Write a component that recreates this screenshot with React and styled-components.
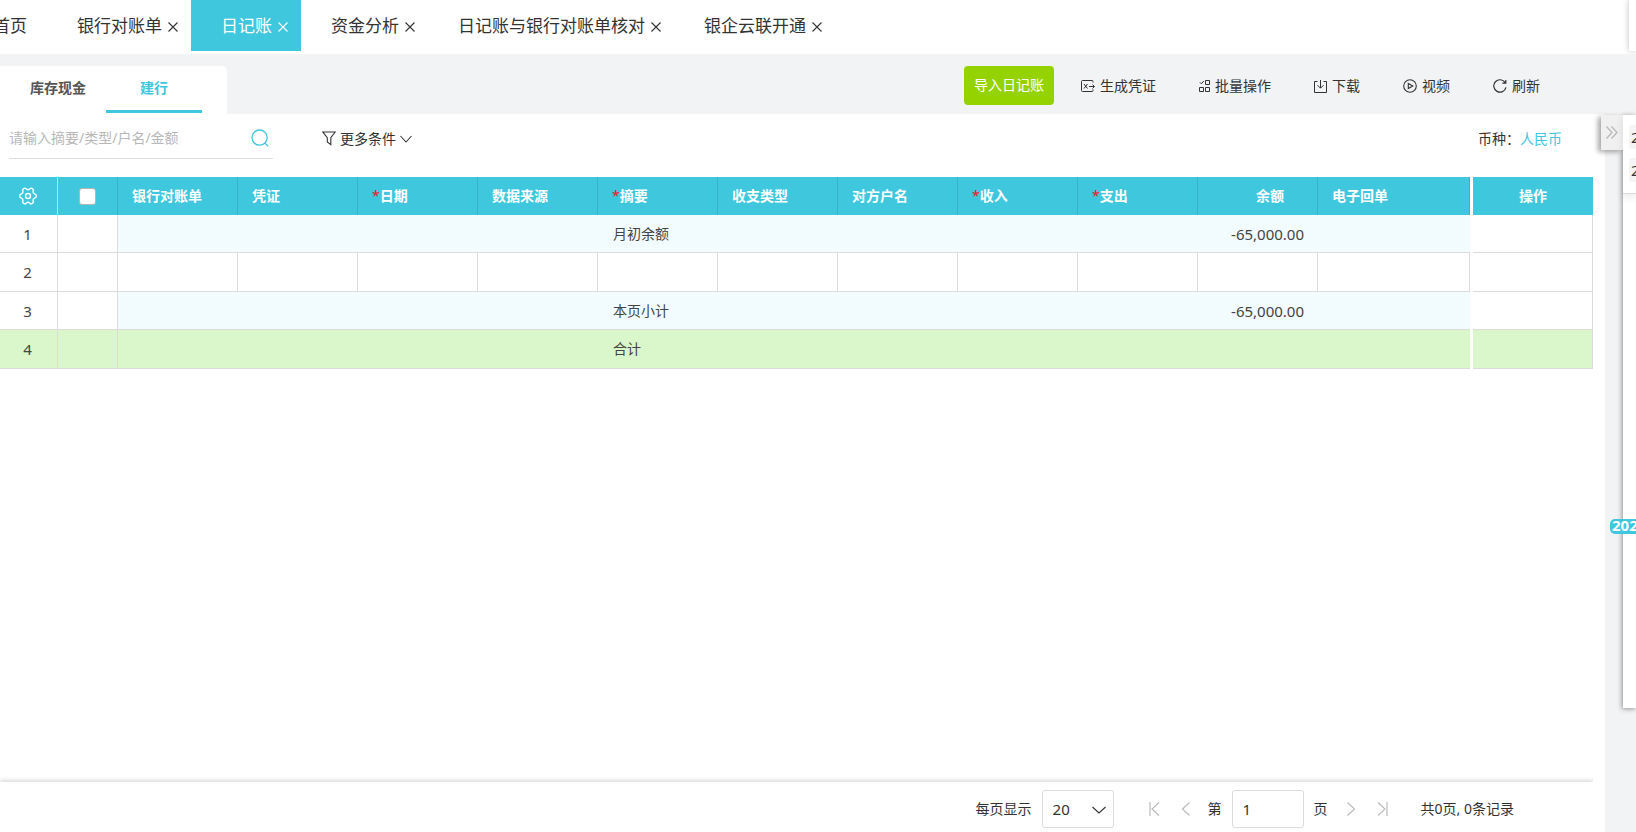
import React from "react";
import styled, { createGlobalStyle, css } from "styled-components";

const cyan = "#3fc7de";
const line = "#dcdcdc";

const GlobalStyle = createGlobalStyle`
  *, *::before, *::after { box-sizing: border-box; }
  body {
    margin: 0;
    background: #fff;
    color: #333;
    font-family: "Noto Sans", "Noto Sans CJK SC", sans-serif;
    font-size: 14px;
    line-height: 20px;
  }
  button, input, select { font: inherit; color: inherit; margin: 0; }
`;

const Page = styled.div`
  display: flex;
  flex-direction: column;
  min-height: 100vh;
  overflow: hidden;
`;

/* window tabs */
const TopBar = styled.header`
  display: flex;
  justify-content: space-between;
  height: 54px;
`;
const WindowTabs = styled.nav`
  display: flex;
  height: 51px;
  margin-left: -37px;
`;
const WindowTab = styled.div`
  display: flex;
  align-items: center;
  gap: 6px;
  padding: 0 ${(p) => (p.$fixed ? "20px" : "13px")} 0 30px;
  background: ${(p) => (p.$active ? cyan : "transparent")};
  color: ${(p) => (p.$active ? "#fff" : "#333")};
`;
const WindowLink = styled.a`
  color: inherit;
  font-size: 17px;
  line-height: 24px;
  text-decoration: none;
  white-space: nowrap;
`;
const BareButton = styled.button`
  display: flex;
  align-items: center;
  padding: 0;
  border: 0;
  background: none;
  cursor: pointer;
`;
const CloseButton = styled(BareButton)`
  padding-top: 3px;
`;
const TopBox = styled.div`
  width: 7px;
  height: 51px;
  background: #fff;
  box-shadow: 0 0 6px rgba(0, 0, 0, 0.25);
`;

const Body = styled.div`
  position: relative;
  display: flex;
  flex: 1;
  background: #f2f3f5;
`;
const Main = styled.main`
  display: flex;
  flex: 1;
  flex-direction: column;
  min-width: 0;
  margin-right: 31px;
`;

const ActionBar = styled.div`
  display: flex;
  align-items: flex-end;
  justify-content: space-between;
  height: 60px;
`;
const AccountTabs = styled.div`
  display: flex;
  height: 48px;
  padding: 0 25px 0 10px;
  border-radius: 0 5px 0 0;
  background: #fff;
`;
const AccountTab = styled.button`
  width: 96px;
  height: 47px;
  padding: 0;
  border: 0;
  border-bottom: 3px solid ${(p) => (p.$active ? cyan : "transparent")};
  background: none;
  color: ${(p) => (p.$active ? cyan : "#555")};
  font-weight: 700;
`;
const Actions = styled.div`
  display: flex;
  align-items: center;
  gap: 43px;
  height: 48px;
  padding: 0 65px 10px 0;
`;
const ImportButton = styled.button`
  height: 39px;
  margin-right: -16px;
  padding: 0 10px;
  border: 0;
  border-radius: 4px;
  background: #95d300;
  color: #fff;
`;
const Action = styled(BareButton)`
  gap: 5px;
  padding-top: 2px;
  white-space: nowrap;
`;

/* search row */
const Content = styled.section`
  display: flex;
  flex: 1;
  flex-direction: column;
  padding-right: 12px;
  background: #fff;
`;
const FilterRow = styled.div`
  display: flex;
  align-items: center;
  height: 63px;
  padding: 0 31px 14px 9px;
`;
const SearchBox = styled.label`
  display: flex;
  align-items: center;
  width: 264px;
  height: 40px;
  padding-right: 4px;
  border-bottom: 1px solid ${line};
`;
const SearchInput = styled.input`
  flex: 1;
  min-width: 0;
  padding: 0;
  border: 0;
  outline: 0;
  background: none;
  &::placeholder { color: #b8b8b8; }
`;
const MoreButton = styled(BareButton)`
  gap: 4px;
  margin-left: 49px;
`;
const Currency = styled.div`
  margin-left: auto;
  a { color: ${cyan}; text-decoration: none; }
`;

/* journal table */
const Table = styled.table`
  width: 100%;
  table-layout: fixed;
  border-collapse: separate;
  border-spacing: 0;
`;
const Col = styled.col`
  width: ${(p) => (p.$w ? `${p.$w}px` : "auto")};
`;
const HeadCell = styled.th`
  height: 38px;
  padding: 0 ${(p) => (p.$align === "right" ? "33px" : "0")} 0 ${(p) => (p.$align ? "0" : "14px")};
  border-right: 1px solid ${(p) => (p.$first ? "#c5dde1" : "#34b3c9")};
  background: ${cyan};
  color: #fff;
  font-weight: 700;
  text-align: ${(p) => p.$align || "left"};
  ${(p) => p.$pinned && css`
    border-right: 0;
    border-left: 3px solid #fff;
  `}
  svg, input { display: block; margin: 0 auto; }
`;
const Required = styled.span`
  color: #f01818;
  font-weight: 400;
`;
const Row = styled.tr`
  height: 38px;
  background: ${(p) => (p.$total ? "#d9f7ca" : "#fff")};
  &:nth-child(even) { height: 39px; }
`;
const Cell = styled.td`
  padding: 0 14px 0 15px;
  border-bottom: 1px solid ${line};
  border-right: ${(p) => (p.$merged ? "0" : `1px solid ${line}`)};
  background: ${(p) => (p.$tint ? "#f2fbfe" : "inherit")};
  color: #444;
  text-align: ${(p) => p.$align || "left"};
  white-space: nowrap;
  ${(p) => p.$numeric && css`font-size: 15px;`}
  ${(p) => p.$index && css`padding: 0 2px 0 0;`}
`;
const PinnedCell = styled(Cell)`
  border-bottom: 0;
  box-shadow: inset 3px 0 #fff, inset 0 -1px ${line};
`;
const CheckAll = styled.input`
  width: 17px;
  height: 17px;
  appearance: none;
  border: 1px solid #b5b5b5;
  border-radius: 3px;
  background: #fff;
  &:checked { background: #1c8ea3; }
`;
const SettingsButton = styled(BareButton)`
  width: 100%;
  padding-right: 2px;
  color: #fff;
`;

/* pager */
const Pager = styled.footer`
  display: flex;
  align-items: center;
  justify-content: flex-end;
  height: 50px;
  margin-top: auto;
  padding: 3px 79px 0 0;
  box-shadow: 0 -2px 4px rgba(0, 0, 0, 0.14);
  clip-path: inset(-12px 0 0 0);
  white-space: nowrap;
`;
const PageSize = styled.label`
  display: flex;
  align-items: center;
  gap: 10px;
`;
const SelectWrap = styled.span`
  position: relative;
  svg {
    position: absolute;
    right: 8px;
    top: 16px;
    pointer-events: none;
  }
`;
const boxed = css`
  display: block;
  width: 72px;
  height: 38px;
  padding: 0 10px;
  border: 1px solid ${line};
  border-radius: 3px;
  background: #fff;
  font-size: 15px;
`;
const Select = styled.select`
  ${boxed}
  appearance: none;
`;
const PageInput = styled.input`
  ${boxed}
`;
const Steps = styled.div`
  display: flex;
  align-items: center;
  gap: 21px;
  margin: 0 ${(p) => (p.$after ? "33px" : "17px")} 0 ${(p) => (p.$after ? "18px" : "35px")};
`;
const PageNumber = styled.label`
  display: flex;
  align-items: center;
  gap: 10px;
`;

/* collapsed drawer at the window's edge */
const Drawer = styled.aside`
  position: absolute;
  top: 61px;
  right: 0;
  bottom: 124px;
  width: 13px;
  background: #fff;
  box-shadow: -1px 1px 5px rgba(0, 0, 0, 0.4);
`;
const DrawerHandle = styled.button`
  position: absolute;
  top: 0;
  right: 13px;
  display: flex;
  align-items: center;
  justify-content: center;
  width: 22px;
  height: 35px;
  padding: 0;
  border: 0;
  background: #f0f0f0;
  box-shadow: -3px 2px 5px rgba(0, 0, 0, 0.35);
`;
const DrawerHead = styled.div`
  position: relative;
  display: flex;
  flex-direction: column;
  gap: 9px;
  height: 79px;
  padding: 10px 0 0 6px;
  border-bottom: 1px solid ${line};
  background: #fff;
  box-shadow: 0 3px 8px rgba(0, 0, 0, 0.1);
  overflow: hidden;
`;
const DrawerTag = styled.span`
  height: 24px;
  padding-left: 2px;
  border-radius: 3px 0 0 3px;
  background: #f4f4f4;
  font-size: 15px;
  line-height: 24px;
`;
const YearBadge = styled.span`
  position: absolute;
  top: 404px;
  right: 0;
  width: 26px;
  height: 15px;
  padding-left: 2px;
  overflow: hidden;
  border-radius: 5px 0 0 5px;
  background: ${cyan};
  color: #fff;
  font-size: 15px;
  font-weight: 700;
  line-height: 13px;
`;

const Svg = ({ w, h, sw = 1, children, color = "currentColor" }) => (
  <svg width={w} height={h} viewBox={`0 0 ${w} ${h}`} fill="none" stroke={color} strokeWidth={sw} aria-hidden="true">
    {children}
  </svg>
);
const CloseIcon = () => <Svg w={10} h={10} sw={1.1}><path d="M.5.5l9 9M9.5.5l-9 9" /></Svg>;
const VoucherIcon = () => (
  <Svg w={14} h={12}>
    <path d="M12 2.5V1.5q0-1-1-1h-9.500q-1 0-1 1v9q0 1 1 1h9.500q1 0 1-1V9.500M3 4l3.500 4.500M6.500 4L3 8.500M8 6.500h5.300M11.500 4.500l2 2-2 2" />
  </Svg>
);
const BatchIcon = () => (
  <Svg w={11} h={12}>
    <path d="M.8 2.200l1.600 1.600L4.800 1M6.500.5h4v4h-4zM.5 7.500h4v4h-4zM6.500 7.500h4v4h-4z" />
  </Svg>
);
const DownloadIcon = () => (
  <Svg w={13} h={13}>
    <path d="M3.500 1.500h-3v11h12v-11h-3M6.500 0v8M3.500 5.200l3 3 3-3" />
  </Svg>
);
const VideoIcon = () => (
  <Svg w={14} h={14} sw={1.1}>
    <circle cx="7" cy="7" r="6.300" />
    <path d="M5.300 4.400v5.200L9.800 7z" />
  </Svg>
);
const RefreshIcon = () => (
  <Svg w={14} h={14} sw={1.2}>
    <path d="M12.200 3.600A6.200 6.200 0 1 0 13 8.400M12.800.9v3.300H9.400" />
  </Svg>
);
const SearchIcon = () => (
  <Svg w={18} h={18} sw={1.3} color={cyan}>
    <circle cx="8.600" cy="8.600" r="7.600" />
    <path d="M13.600 13.800l3.400 3.400" />
  </Svg>
);
const FunnelIcon = () => (
  <Svg w={14} h={15} sw={1.1}>
    <path d="M.8 1h12.400L8.800 6.600v7L5.300 11V6.600z" />
  </Svg>
);
const ChevronDown = ({ w = 12 }) => (
  <Svg w={w} h={8} sw={1.1}><path d={`M.5 1l${w / 2 - 0.5} 6 ${w / 2 - 0.5}-6`} /></Svg>
);
const GearIcon = () => (
  <Svg w={18} h={18} sw={1.4}>
    <circle cx="9" cy="9" r="2.500" />
    <path
      strokeLinejoin="round"
      d="M5.200 1.300Q6.800.7 7.600 2.300Q9 3.300 10.400 2.300Q11.200.7 12.800 1.300L14 2.200Q14.700 3.200 14 4.600Q14 6.400 15.700 6.900Q17.300 7.400 17.300 9Q17.300 10.600 15.700 11.100Q14 11.600 14 13.400Q14.700 14.800 14 15.800L12.800 16.700Q11.200 17.300 10.400 15.700Q9 14.700 7.600 15.700Q6.800 17.300 5.200 16.700L4 15.800Q3.300 14.800 4 13.400Q4 11.600 2.300 11.100Q.7 10.600.7 9Q.7 7.400 2.300 6.900Q4 6.400 4 4.600Q3.300 3.200 4 2.200Z"
    />
  </Svg>
);
const FirstIcon = () => <Svg w={11} h={14} color="#bbb" sw={1.2}><path d="M1 0v14M10 .5L3 7l7 6.500" /></Svg>;
const PrevIcon = () => <Svg w={10} h={14} color="#bbb" sw={1.2}><path d="M8.500.5L1.500 7l7 6.500" /></Svg>;
const NextIcon = () => <Svg w={10} h={14} color="#bbb" sw={1.2}><path d="M1.500.5l7 6.500-7 6.500" /></Svg>;
const LastIcon = () => <Svg w={11} h={14} color="#bbb" sw={1.2}><path d="M10 0v14M1 .5L8 7l-7 6.500" /></Svg>;
const DoubleRight = () => (
  <Svg w={12} h={13} color="#b8b8b8" sw={1.3}><path d="M.5.5l5.500 6-5.500 6M5.500.5l5.500 6-5.500 6" /></Svg>
);

const windows = ["首页", "银行对账单", "日记账", "资金分析", "日记账与银行对账单核对", "银企云联开通"];
const actions = [
  ["生成凭证", VoucherIcon],
  ["批量操作", BatchIcon],
  ["下载", DownloadIcon],
  ["视频", VideoIcon],
  ["刷新", RefreshIcon],
];
const columns = [
  { name: "银行对账单" },
  { name: "凭证" },
  { name: "日期", required: true },
  { name: "数据来源" },
  { name: "摘要", required: true },
  { name: "收支类型" },
  { name: "对方户名" },
  { name: "收入", required: true },
  { name: "支出", required: true },
  { name: "余额", align: "right" },
  { name: "电子回单" },
];
const rows = [
  { merged: true, tint: true, 摘要: "月初余额", 余额: "-65,000.00" },
  {},
  { merged: true, tint: true, 摘要: "本页小计", 余额: "-65,000.00" },
  { merged: true, total: true, 摘要: "合计" },
];

export default function App() {
  return (
    <Page>
      <GlobalStyle />
      <TopBar>
        <WindowTabs>
          {windows.map((name, i) => (
            <WindowTab key={name} $active={i === 2} $fixed={i === 0}>
              <WindowLink href="#">{name}</WindowLink>
              {i > 0 && <CloseButton aria-label={`关闭${name}`}><CloseIcon /></CloseButton>}
            </WindowTab>
          ))}
        </WindowTabs>
        <TopBox />
      </TopBar>
      <Body>
        <Main>
          <ActionBar>
            <AccountTabs>
              <AccountTab>库存现金</AccountTab>
              <AccountTab $active>建行</AccountTab>
            </AccountTabs>
            <Actions>
              <ImportButton>导入日记账</ImportButton>
              {actions.map(([name, Icon]) => (
                <Action key={name}><Icon />{name}</Action>
              ))}
            </Actions>
          </ActionBar>
          <Content>
            <FilterRow>
              <SearchBox>
                <SearchInput aria-label="搜索" placeholder="请输入摘要/类型/户名/金额" />
                <SearchIcon />
              </SearchBox>
              <MoreButton><FunnelIcon />更多条件<ChevronDown /></MoreButton>
              <Currency>币种：<a href="#">人民币</a></Currency>
            </FilterRow>
            <Table>
              <colgroup>
                <Col $w={58} />
                <Col $w={60} />
                {columns.map((c, i) => <Col key={c.name} $w={i < columns.length - 1 ? 120 : 0} />)}
                <Col $w={123} />
              </colgroup>
              <thead>
                <tr>
                  <HeadCell $align="center" $first>
                    <SettingsButton aria-label="列设置"><GearIcon /></SettingsButton>
                  </HeadCell>
                  <HeadCell $align="center"><CheckAll type="checkbox" aria-label="全选" /></HeadCell>
                  {columns.map((c) => (
                    <HeadCell key={c.name} $align={c.align}>
                      {c.required && <Required>*</Required>}{c.name}
                    </HeadCell>
                  ))}
                  <HeadCell $align="center" $pinned>操作</HeadCell>
                </tr>
              </thead>
              <tbody>
                {rows.map((r, i) => (
                  <Row key={i} $total={r.total}>
                    <Cell $align="center" $numeric $index>{i + 1}</Cell>
                    <Cell />
                    {columns.map((c) => (
                      <Cell key={c.name} $merged={r.merged} $tint={r.tint} $align={c.align} $numeric={c.align === "right"}>
                        {r[c.name]}
                      </Cell>
                    ))}
                    <PinnedCell />
                  </Row>
                ))}
              </tbody>
            </Table>
            <Pager>
              <PageSize>
                每页显示
                <SelectWrap>
                  <Select defaultValue="20"><option>20</option><option>50</option></Select>
                  <ChevronDown w={14} />
                </SelectWrap>
              </PageSize>
              <Steps>
                <BareButton aria-label="首页"><FirstIcon /></BareButton>
                <BareButton aria-label="上一页"><PrevIcon /></BareButton>
              </Steps>
              <PageNumber>第<PageInput defaultValue="1" />页</PageNumber>
              <Steps $after>
                <BareButton aria-label="下一页"><NextIcon /></BareButton>
                <BareButton aria-label="末页"><LastIcon /></BareButton>
              </Steps>
              <span>共0页, 0条记录</span>
            </Pager>
          </Content>
        </Main>
        <Drawer>
          <DrawerHandle aria-label="收起"><DoubleRight /></DrawerHandle>
          <DrawerHead>
            <DrawerTag>2</DrawerTag>
            <DrawerTag>2</DrawerTag>
          </DrawerHead>
          <YearBadge>202</YearBadge>
        </Drawer>
      </Body>
    </Page>
  );
}
